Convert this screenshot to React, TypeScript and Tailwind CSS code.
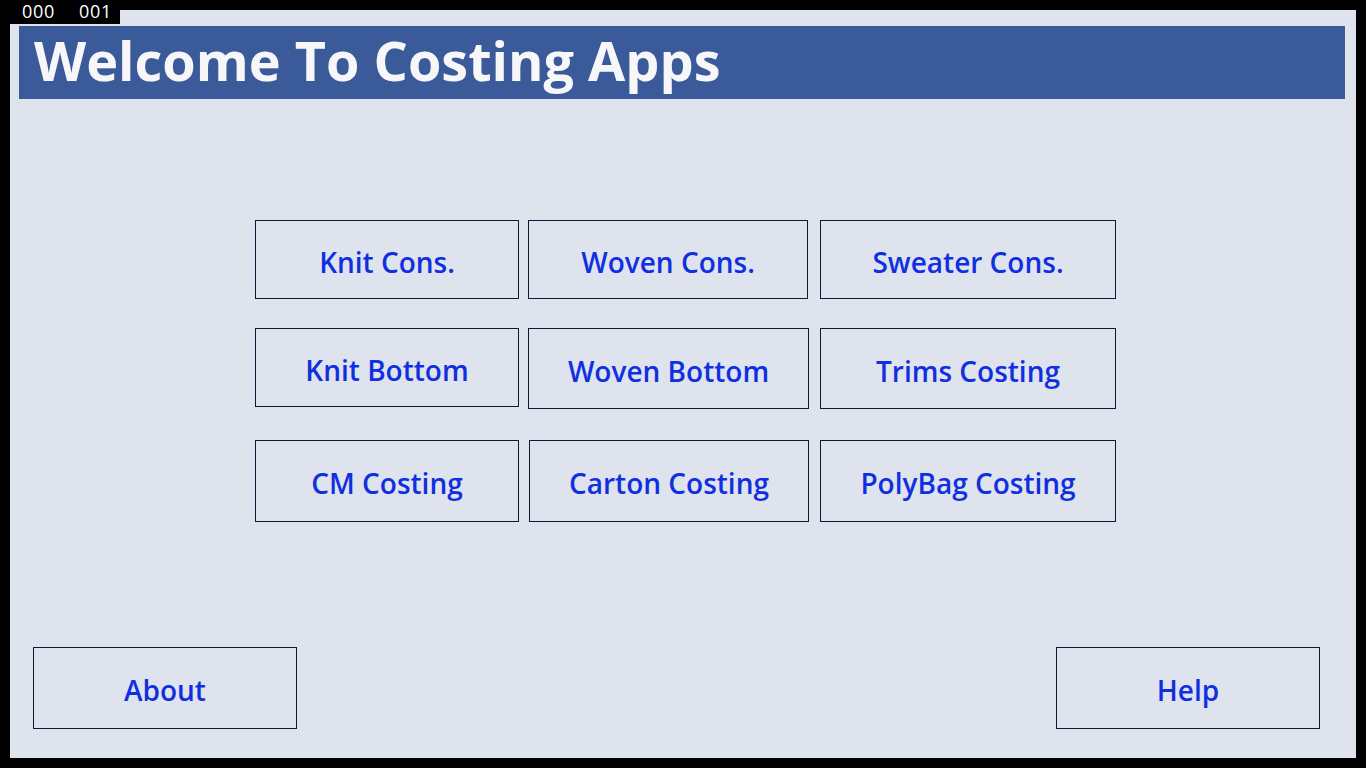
import React from "react";

const font = { fontFamily: '"Open Sans", "Noto Sans", sans-serif' };

function Btn({ label, w, h, extra = "" }: { label: string; w: string; h: string; extra?: string }) {
  return (
    <button
      className={`${w} ${h} ${extra} shrink-0 border border-[#10163a] bg-transparent flex items-center justify-center pt-[4px] text-[28px] font-semibold text-[#1030e0] leading-none`}
      style={font}
    >
      {label}
    </button>
  );
}

export default function App() {
  return (
    <div className="relative w-[1366px] h-[768px] bg-black p-[10px]" style={font}>
      <div className="h-full bg-[#dfe3ee] flex flex-col">
        <div className="mt-[16px] ml-[9px] mr-[11px] h-[73px] bg-[#3a5a9a] flex items-center pl-[15px]">
          <h1 className="text-[54px] font-bold text-[#f7f7fa] leading-none pb-[6px]" style={font}>
            Welcome To Costing Apps
          </h1>
        </div>

        <div className="mt-[121px] ml-[245px] flex flex-col">
          <div className="flex items-start">
            <Btn label="Knit Cons." w="w-[264px]" h="h-[79px]" />
            <Btn label="Woven Cons." w="w-[280px]" h="h-[79px]" extra="ml-[9px]" />
            <Btn label="Sweater Cons." w="w-[296px]" h="h-[79px]" extra="ml-[12px]" />
          </div>
          <div className="flex items-start mt-[29px]">
            <Btn label="Knit Bottom" w="w-[264px]" h="h-[79px]" />
            <Btn label="Woven Bottom" w="w-[281px]" h="h-[81px]" extra="ml-[9px]" />
            <Btn label="Trims Costing" w="w-[296px]" h="h-[81px]" extra="ml-[11px]" />
          </div>
          <div className="flex items-start mt-[31px]">
            <Btn label="CM Costing" w="w-[264px]" h="h-[82px]" />
            <Btn label="Carton Costing" w="w-[280px]" h="h-[82px]" extra="ml-[10px]" />
            <Btn label="PolyBag Costing" w="w-[296px]" h="h-[82px]" extra="ml-[11px]" />
          </div>
        </div>

        <div className="mt-[125px] flex justify-between pl-[23px] pr-[36px]">
          <Btn label="About" w="w-[264px]" h="h-[82px]" />
          <Btn label="Help" w="w-[264px]" h="h-[82px]" />
        </div>
      </div>

      <div className="absolute left-0 top-0 w-[120px] h-[24px] bg-black flex items-start text-white text-[18px] tracking-[0.7px] leading-[22px]" style={font}>
        <span className="ml-[22px]">000</span>
        <span className="ml-[24px]">001</span>
      </div>
    </div>
  );
}
